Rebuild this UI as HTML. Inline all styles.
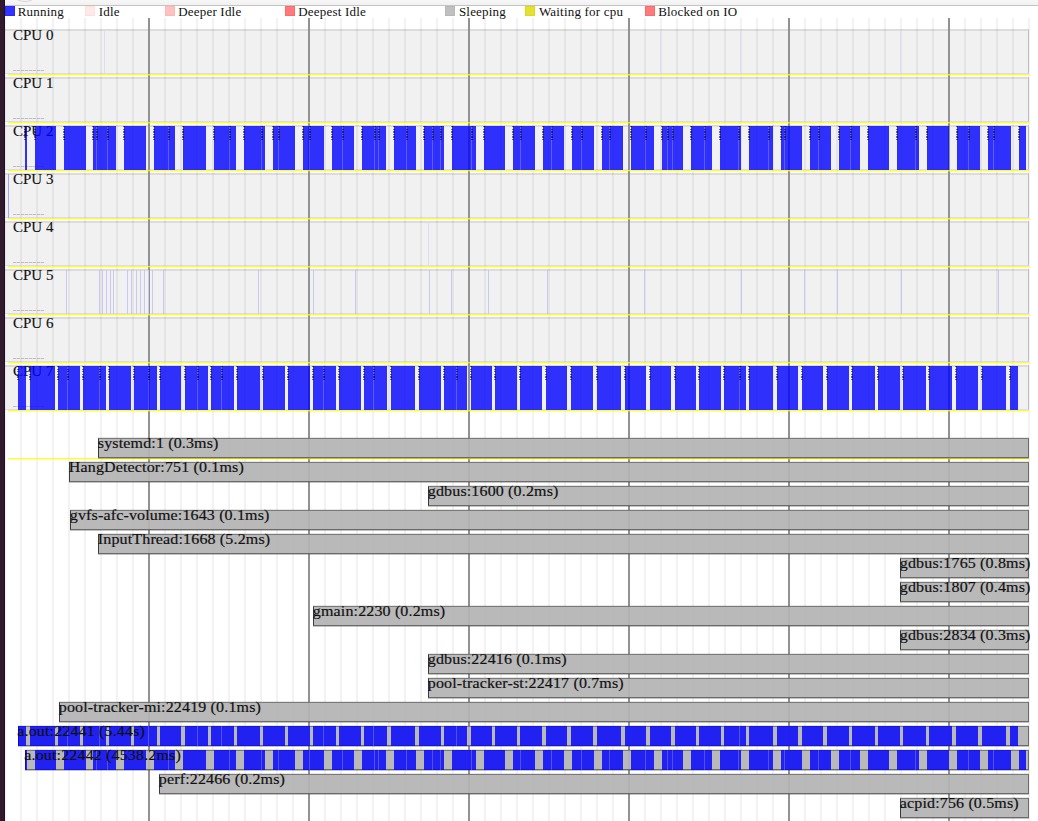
<!DOCTYPE html><html><head><meta charset="utf-8"><style>
html,body{margin:0;padding:0;}
body{width:1038px;height:821px;overflow:hidden;background:#fff;position:relative;font-family:"Liberation Serif",serif;color:#000;}
div{position:absolute;box-sizing:border-box;}
.t{white-space:pre;line-height:20px;}
.lg{font-size:13px;line-height:14px;top:5px;letter-spacing:0.2px;white-space:pre;color:#111;}
.sq{top:6px;width:10px;height:10px;}
.mn{width:2px;background:rgba(0,0,0,0.05);}
.mj{width:2px;background:#929292;}
.rowbg{left:5px;width:1024px;background:#f1f1f1;border-top:2px solid #dcdcdc;border-right:1px solid #c8c8c8;}
.yl{left:8px;width:1021px;height:2px;background:linear-gradient(rgba(255,255,0,.85) 50%,rgba(255,255,0,.3) 50%);}
.cl{font-size:15px;line-height:18px;left:13px;white-space:pre;color:#111;-webkit-text-stroke:0.15px #111;}
.dash{left:13px;width:31px;height:1px;background:repeating-linear-gradient(90deg,#c4bcc4 0 3px,#dcd8dc 3px 4px);}
.b{background:rgba(0,0,255,0.8);}
.sp{width:1px;background:rgba(255,255,255,0.22);}
.b2{background:rgba(0,0,255,0.82);}
.tx{width:2px;height:14px;background:repeating-linear-gradient(180deg,rgba(0,0,30,.55) 0 1.3px,rgba(0,0,0,0) 1.3px 2.6px);}
.th{width:1px;background:#c4c4f4;}
.bar{box-shadow:0 1px 0 rgba(60,60,50,0.3),0 -1px 0 rgba(60,60,60,0.12);background:rgba(180,180,180,0.93);border:1px solid #6a6a6a;border-top-color:#7a7a7a;border-left-color:#3a3a3a;}
.pl{font-size:16px;line-height:20px;letter-spacing:0.15px;-webkit-text-stroke:0.2px #111;transform:scaleY(0.9);transform-origin:0 15.4px;white-space:pre;color:#111;}

</style></head><body>
<div style="left:5px;top:0;width:1033px;height:5px;background:linear-gradient(#f7f7f7,#f1f1f1);"></div>
<div style="left:8px;top:-32px;width:34px;height:34px;border-radius:50%;border:1px solid #d4d4d4;"></div>
<div style="left:5px;top:5px;width:1033px;height:1px;background:#c4c4c4;"></div>
<div class="sq" style="left:5px;background:#3333ff;border:1px solid #2a2aff;"></div>
<div class="lg" style="left:17.7px;">Running</div>
<div class="sq" style="left:85px;background:#ffe8e8;border:1px solid #ffe0e0;"></div>
<div class="lg" style="left:98.7px;">Idle</div>
<div class="sq" style="left:165px;background:#ffc0c0;border:1px solid #ffb8b8;"></div>
<div class="lg" style="left:178.2px;">Deeper Idle</div>
<div class="sq" style="left:285px;background:#ff7a7a;border:1px solid #ff6a6a;"></div>
<div class="lg" style="left:298.2px;">Deepest Idle</div>
<div class="sq" style="left:445px;background:#c0c0c0;border:1px solid #b8b8b8;"></div>
<div class="lg" style="left:458.9px;">Sleeping</div>
<div class="sq" style="left:525px;background:#e4e034;border:1px solid #e0da10;"></div>
<div class="lg" style="left:538.9px;">Waiting for cpu</div>
<div class="sq" style="left:645px;background:#ff7a7a;border:1px solid #ff6a6a;"></div>
<div class="lg" style="left:658.2px;">Blocked on IO</div>
<div class="rowbg" style="top:29px;height:44px;"></div>
<div style="left:5px;top:73px;width:1024px;height:1px;background:#dcdcf0;"></div>
<div class="rowbg" style="top:77px;height:44px;"></div>
<div style="left:5px;top:121px;width:1024px;height:1px;background:#dcdcf0;"></div>
<div class="rowbg" style="top:125px;height:44px;"></div>
<div style="left:5px;top:169px;width:1024px;height:1px;background:#dcdcf0;"></div>
<div class="rowbg" style="top:173px;height:44px;"></div>
<div style="left:5px;top:217px;width:1024px;height:1px;background:#dcdcf0;"></div>
<div class="rowbg" style="top:221px;height:44px;"></div>
<div style="left:5px;top:265px;width:1024px;height:1px;background:#dcdcf0;"></div>
<div class="rowbg" style="top:269px;height:44px;"></div>
<div style="left:5px;top:313px;width:1024px;height:1px;background:#dcdcf0;"></div>
<div class="rowbg" style="top:317px;height:44px;"></div>
<div style="left:5px;top:361px;width:1024px;height:1px;background:#dcdcf0;"></div>
<div class="rowbg" style="top:365px;height:44px;"></div>
<div style="left:5px;top:409px;width:1024px;height:1px;background:#dcdcf0;"></div>
<div class="mn" style="left:4px;top:18px;height:803px;"></div>
<div class="mn" style="left:20px;top:18px;height:803px;"></div>
<div class="mn" style="left:36px;top:18px;height:803px;"></div>
<div class="mn" style="left:52px;top:18px;height:803px;"></div>
<div class="mn" style="left:68px;top:18px;height:803px;"></div>
<div class="mn" style="left:84px;top:18px;height:803px;"></div>
<div class="mn" style="left:100px;top:18px;height:803px;"></div>
<div class="mn" style="left:116px;top:18px;height:803px;"></div>
<div class="mn" style="left:132px;top:18px;height:803px;"></div>
<div class="mn" style="left:164px;top:18px;height:803px;"></div>
<div class="mn" style="left:180px;top:18px;height:803px;"></div>
<div class="mn" style="left:196px;top:18px;height:803px;"></div>
<div class="mn" style="left:212px;top:18px;height:803px;"></div>
<div class="mn" style="left:228px;top:18px;height:803px;"></div>
<div class="mn" style="left:244px;top:18px;height:803px;"></div>
<div class="mn" style="left:260px;top:18px;height:803px;"></div>
<div class="mn" style="left:276px;top:18px;height:803px;"></div>
<div class="mn" style="left:292px;top:18px;height:803px;"></div>
<div class="mn" style="left:324px;top:18px;height:803px;"></div>
<div class="mn" style="left:340px;top:18px;height:803px;"></div>
<div class="mn" style="left:356px;top:18px;height:803px;"></div>
<div class="mn" style="left:372px;top:18px;height:803px;"></div>
<div class="mn" style="left:388px;top:18px;height:803px;"></div>
<div class="mn" style="left:404px;top:18px;height:803px;"></div>
<div class="mn" style="left:420px;top:18px;height:803px;"></div>
<div class="mn" style="left:436px;top:18px;height:803px;"></div>
<div class="mn" style="left:452px;top:18px;height:803px;"></div>
<div class="mn" style="left:484px;top:18px;height:803px;"></div>
<div class="mn" style="left:500px;top:18px;height:803px;"></div>
<div class="mn" style="left:516px;top:18px;height:803px;"></div>
<div class="mn" style="left:532px;top:18px;height:803px;"></div>
<div class="mn" style="left:548px;top:18px;height:803px;"></div>
<div class="mn" style="left:564px;top:18px;height:803px;"></div>
<div class="mn" style="left:580px;top:18px;height:803px;"></div>
<div class="mn" style="left:596px;top:18px;height:803px;"></div>
<div class="mn" style="left:612px;top:18px;height:803px;"></div>
<div class="mn" style="left:644px;top:18px;height:803px;"></div>
<div class="mn" style="left:660px;top:18px;height:803px;"></div>
<div class="mn" style="left:676px;top:18px;height:803px;"></div>
<div class="mn" style="left:692px;top:18px;height:803px;"></div>
<div class="mn" style="left:708px;top:18px;height:803px;"></div>
<div class="mn" style="left:724px;top:18px;height:803px;"></div>
<div class="mn" style="left:740px;top:18px;height:803px;"></div>
<div class="mn" style="left:756px;top:18px;height:803px;"></div>
<div class="mn" style="left:772px;top:18px;height:803px;"></div>
<div class="mn" style="left:804px;top:18px;height:803px;"></div>
<div class="mn" style="left:820px;top:18px;height:803px;"></div>
<div class="mn" style="left:836px;top:18px;height:803px;"></div>
<div class="mn" style="left:852px;top:18px;height:803px;"></div>
<div class="mn" style="left:868px;top:18px;height:803px;"></div>
<div class="mn" style="left:884px;top:18px;height:803px;"></div>
<div class="mn" style="left:900px;top:18px;height:803px;"></div>
<div class="mn" style="left:916px;top:18px;height:803px;"></div>
<div class="mn" style="left:932px;top:18px;height:803px;"></div>
<div class="mn" style="left:964px;top:18px;height:803px;"></div>
<div class="mn" style="left:980px;top:18px;height:803px;"></div>
<div class="mn" style="left:996px;top:18px;height:803px;"></div>
<div class="mn" style="left:1012px;top:18px;height:803px;"></div>
<div class="mn" style="left:1028px;top:18px;height:803px;"></div>
<div class="mj" style="left:148px;top:18px;height:803px;"></div>
<div class="mj" style="left:308px;top:18px;height:803px;"></div>
<div class="mj" style="left:468px;top:18px;height:803px;"></div>
<div class="mj" style="left:628px;top:18px;height:803px;"></div>
<div class="mj" style="left:788px;top:18px;height:803px;"></div>
<div class="mj" style="left:948px;top:18px;height:803px;"></div>
<div class="cl" style="top:26px;">CPU 0</div>
<div class="dash" style="top:70px;"></div>
<div class="cl" style="top:74px;">CPU 1</div>
<div class="dash" style="top:118px;"></div>
<div class="cl" style="top:122px;">CPU 2</div>
<div class="dash" style="top:166px;"></div>
<div class="cl" style="top:170px;">CPU 3</div>
<div class="dash" style="top:214px;"></div>
<div class="cl" style="top:218px;">CPU 4</div>
<div class="dash" style="top:262px;"></div>
<div class="cl" style="top:266px;">CPU 5</div>
<div class="dash" style="top:310px;"></div>
<div class="cl" style="top:314px;">CPU 6</div>
<div class="dash" style="top:358px;"></div>
<div class="cl" style="top:362px;">CPU 7</div>
<div class="dash" style="top:406px;"></div>
<div class="th" style="left:104px;top:30px;height:44px;background:#dcdcf4;"></div>
<div class="th" style="left:660.4px;top:30px;height:44px;background:#dcdcf4;"></div>
<div class="th" style="left:740px;top:30px;height:44px;background:#dcdcf4;"></div>
<div class="th" style="left:900px;top:30px;height:44px;background:#dcdcf4;"></div>
<div class="th" style="left:8px;top:174px;height:44px;background:#a4a4ff;"></div>
<div class="th" style="left:428px;top:222px;height:44px;background:#dcdcf4;"></div>
<div class="th" style="left:66.4px;top:270px;height:44px;background:#c8c8f2;"></div>
<div class="th" style="left:99px;top:270px;height:44px;background:#c8c8f2;"></div>
<div class="th" style="left:102px;top:270px;height:44px;background:#c8c8f2;"></div>
<div class="th" style="left:106px;top:270px;height:44px;background:#c8c8f2;"></div>
<div class="th" style="left:110px;top:270px;height:44px;background:#c8c8f2;"></div>
<div class="th" style="left:113px;top:270px;height:44px;background:#c8c8f2;"></div>
<div class="th" style="left:127px;top:270px;height:44px;background:#c8c8f2;"></div>
<div class="th" style="left:131px;top:270px;height:44px;background:#c8c8f2;"></div>
<div class="th" style="left:136px;top:270px;height:44px;background:#c8c8f2;"></div>
<div class="th" style="left:140px;top:270px;height:44px;background:#c8c8f2;"></div>
<div class="th" style="left:144px;top:270px;height:44px;background:#c8c8f2;"></div>
<div class="th" style="left:148px;top:270px;height:44px;background:#c8c8f2;"></div>
<div class="th" style="left:151.6px;top:270px;height:44px;background:#c8c8f2;"></div>
<div class="th" style="left:163px;top:270px;height:44px;background:#c8c8f2;"></div>
<div class="th" style="left:258px;top:270px;height:44px;background:#c8c8f2;"></div>
<div class="th" style="left:313px;top:270px;height:44px;background:#c8c8f2;"></div>
<div class="th" style="left:354.7px;top:270px;height:44px;background:#c8c8f2;"></div>
<div class="th" style="left:429px;top:270px;height:44px;background:#c8c8f2;"></div>
<div class="th" style="left:451px;top:270px;height:44px;background:#c8c8f2;"></div>
<div class="th" style="left:488px;top:270px;height:44px;background:#c8c8f2;"></div>
<div class="th" style="left:547px;top:270px;height:44px;background:#c8c8f2;"></div>
<div class="th" style="left:644px;top:270px;height:44px;background:#c8c8f2;"></div>
<div class="th" style="left:740.5px;top:270px;height:44px;background:#c8c8f2;"></div>
<div class="th" style="left:804.4px;top:270px;height:44px;background:#c8c8f2;"></div>
<div class="th" style="left:836.7px;top:270px;height:44px;background:#c8c8f2;"></div>
<div class="th" style="left:901px;top:270px;height:44px;background:#c8c8f2;"></div>
<div class="th" style="left:997.7px;top:270px;height:44px;background:#c8c8f2;"></div>
<div class="b" style="left:25px;top:126px;width:1.5px;height:44px;"></div>
<div class="tx" style="left:24px;top:126px;"></div>
<div class="b" style="left:35px;top:126px;width:21px;height:44px;"></div>
<div class="tx" style="left:34px;top:126px;"></div>
<div class="b" style="left:64px;top:126px;width:21.5px;height:44px;"></div>
<div class="tx" style="left:63px;top:126px;"></div>
<div class="b" style="left:93.4px;top:126px;width:22.4px;height:44px;"></div>
<div class="tx" style="left:92.4px;top:126px;"></div>
<div class="b" style="left:123.7px;top:126px;width:22.2px;height:44px;"></div>
<div class="tx" style="left:122.7px;top:126px;"></div>
<div class="b" style="left:153.8px;top:126px;width:21.5px;height:44px;"></div>
<div class="tx" style="left:152.8px;top:126px;"></div>
<div class="b" style="left:183px;top:126px;width:23px;height:44px;"></div>
<div class="tx" style="left:182px;top:126px;"></div>
<div class="b" style="left:214px;top:126px;width:22px;height:44px;"></div>
<div class="tx" style="left:213px;top:126px;"></div>
<div class="b" style="left:244px;top:126px;width:21.3px;height:44px;"></div>
<div class="tx" style="left:243px;top:126px;"></div>
<div class="b" style="left:273.4px;top:126px;width:21.6px;height:44px;"></div>
<div class="tx" style="left:272.4px;top:126px;"></div>
<div class="b" style="left:303px;top:126px;width:21.4px;height:44px;"></div>
<div class="tx" style="left:302px;top:126px;"></div>
<div class="b" style="left:332.4px;top:126px;width:21.2px;height:44px;"></div>
<div class="tx" style="left:331.4px;top:126px;"></div>
<div class="b" style="left:362px;top:126px;width:23.8px;height:44px;"></div>
<div class="tx" style="left:361px;top:126px;"></div>
<div class="b" style="left:394px;top:126px;width:21.7px;height:44px;"></div>
<div class="tx" style="left:393px;top:126px;"></div>
<div class="b" style="left:423.6px;top:126px;width:20.7px;height:44px;"></div>
<div class="tx" style="left:422.6px;top:126px;"></div>
<div class="b" style="left:452.3px;top:126px;width:23.5px;height:44px;"></div>
<div class="tx" style="left:451.3px;top:126px;"></div>
<div class="b" style="left:484px;top:126px;width:20.7px;height:44px;"></div>
<div class="tx" style="left:483px;top:126px;"></div>
<div class="b" style="left:513px;top:126px;width:21.8px;height:44px;"></div>
<div class="tx" style="left:512px;top:126px;"></div>
<div class="b" style="left:543px;top:126px;width:21px;height:44px;"></div>
<div class="tx" style="left:542px;top:126px;"></div>
<div class="b" style="left:572.3px;top:126px;width:21.7px;height:44px;"></div>
<div class="tx" style="left:571.3px;top:126px;"></div>
<div class="b" style="left:602px;top:126px;width:21px;height:44px;"></div>
<div class="tx" style="left:601px;top:126px;"></div>
<div class="b" style="left:631.2px;top:126px;width:22.8px;height:44px;"></div>
<div class="tx" style="left:630.2px;top:126px;"></div>
<div class="b" style="left:662px;top:126px;width:21px;height:44px;"></div>
<div class="tx" style="left:661px;top:126px;"></div>
<div class="b" style="left:691px;top:126px;width:21px;height:44px;"></div>
<div class="tx" style="left:690px;top:126px;"></div>
<div class="b" style="left:720px;top:126px;width:21px;height:44px;"></div>
<div class="tx" style="left:719px;top:126px;"></div>
<div class="b" style="left:749px;top:126px;width:23.8px;height:44px;"></div>
<div class="tx" style="left:748px;top:126px;"></div>
<div class="b" style="left:781px;top:126px;width:21px;height:44px;"></div>
<div class="tx" style="left:780px;top:126px;"></div>
<div class="b" style="left:810px;top:126px;width:21px;height:44px;"></div>
<div class="tx" style="left:809px;top:126px;"></div>
<div class="b" style="left:839px;top:126px;width:21px;height:44px;"></div>
<div class="tx" style="left:838px;top:126px;"></div>
<div class="b" style="left:868px;top:126px;width:21px;height:44px;"></div>
<div class="tx" style="left:867px;top:126px;"></div>
<div class="b" style="left:897.3px;top:126px;width:21.7px;height:44px;"></div>
<div class="tx" style="left:896.3px;top:126px;"></div>
<div class="b" style="left:927px;top:126px;width:22px;height:44px;"></div>
<div class="tx" style="left:926px;top:126px;"></div>
<div class="b" style="left:957px;top:126px;width:23px;height:44px;"></div>
<div class="tx" style="left:956px;top:126px;"></div>
<div class="b" style="left:988px;top:126px;width:22.7px;height:44px;"></div>
<div class="tx" style="left:987px;top:126px;"></div>
<div class="b" style="left:1019px;top:126px;width:7.2px;height:44px;"></div>
<div class="tx" style="left:1018px;top:126px;"></div>
<div class="b" style="left:17.8px;top:366px;width:8.2px;height:44px;"></div>
<div class="tx" style="left:16.8px;top:366px;"></div>
<div class="b" style="left:30px;top:366px;width:25px;height:44px;"></div>
<div class="tx" style="left:29px;top:366px;"></div>
<div class="b" style="left:58px;top:366px;width:22px;height:44px;"></div>
<div class="tx" style="left:57px;top:366px;"></div>
<div class="b" style="left:83.3px;top:366px;width:22.6px;height:44px;"></div>
<div class="tx" style="left:82.3px;top:366px;"></div>
<div class="b" style="left:109.3px;top:366px;width:21.7px;height:44px;"></div>
<div class="tx" style="left:108.3px;top:366px;"></div>
<div class="b" style="left:134.3px;top:366px;width:22.7px;height:44px;"></div>
<div class="tx" style="left:133.3px;top:366px;"></div>
<div class="b" style="left:160.1px;top:366px;width:21.4px;height:44px;"></div>
<div class="tx" style="left:159.1px;top:366px;"></div>
<div class="b" style="left:185.3px;top:366px;width:22.7px;height:44px;"></div>
<div class="tx" style="left:184.3px;top:366px;"></div>
<div class="b" style="left:211.3px;top:366px;width:22.7px;height:44px;"></div>
<div class="tx" style="left:210.3px;top:366px;"></div>
<div class="b" style="left:237.3px;top:366px;width:22.7px;height:44px;"></div>
<div class="tx" style="left:236.3px;top:366px;"></div>
<div class="b" style="left:263.3px;top:366px;width:21.7px;height:44px;"></div>
<div class="tx" style="left:262.3px;top:366px;"></div>
<div class="b" style="left:288.3px;top:366px;width:22px;height:44px;"></div>
<div class="tx" style="left:287.3px;top:366px;"></div>
<div class="b" style="left:313.4px;top:366px;width:22.3px;height:44px;"></div>
<div class="tx" style="left:312.4px;top:366px;"></div>
<div class="b" style="left:339px;top:366px;width:22px;height:44px;"></div>
<div class="tx" style="left:338px;top:366px;"></div>
<div class="b" style="left:364.3px;top:366px;width:23.2px;height:44px;"></div>
<div class="tx" style="left:363.3px;top:366px;"></div>
<div class="b" style="left:391px;top:366px;width:24px;height:44px;"></div>
<div class="tx" style="left:390px;top:366px;"></div>
<div class="b" style="left:418.6px;top:366px;width:22.1px;height:44px;"></div>
<div class="tx" style="left:417.6px;top:366px;"></div>
<div class="b" style="left:444px;top:366px;width:23px;height:44px;"></div>
<div class="tx" style="left:443px;top:366px;"></div>
<div class="b" style="left:471px;top:366px;width:20.6px;height:44px;"></div>
<div class="tx" style="left:470px;top:366px;"></div>
<div class="b" style="left:495px;top:366px;width:22.2px;height:44px;"></div>
<div class="tx" style="left:494px;top:366px;"></div>
<div class="b" style="left:520.3px;top:366px;width:22px;height:44px;"></div>
<div class="tx" style="left:519.3px;top:366px;"></div>
<div class="b" style="left:546px;top:366px;width:21.2px;height:44px;"></div>
<div class="tx" style="left:545px;top:366px;"></div>
<div class="b" style="left:571px;top:366px;width:22px;height:44px;"></div>
<div class="tx" style="left:570px;top:366px;"></div>
<div class="b" style="left:596.6px;top:366px;width:24.4px;height:44px;"></div>
<div class="tx" style="left:595.6px;top:366px;"></div>
<div class="b" style="left:624.6px;top:366px;width:21.4px;height:44px;"></div>
<div class="tx" style="left:623.6px;top:366px;"></div>
<div class="b" style="left:649.7px;top:366px;width:21.3px;height:44px;"></div>
<div class="tx" style="left:648.7px;top:366px;"></div>
<div class="b" style="left:674.5px;top:366px;width:21.5px;height:44px;"></div>
<div class="tx" style="left:673.5px;top:366px;"></div>
<div class="b" style="left:699.2px;top:366px;width:21.6px;height:44px;"></div>
<div class="tx" style="left:698.2px;top:366px;"></div>
<div class="b" style="left:724.3px;top:366px;width:21.7px;height:44px;"></div>
<div class="tx" style="left:723.3px;top:366px;"></div>
<div class="b" style="left:749.4px;top:366px;width:23.8px;height:44px;"></div>
<div class="tx" style="left:748.4px;top:366px;"></div>
<div class="b" style="left:777px;top:366px;width:21.2px;height:44px;"></div>
<div class="tx" style="left:776px;top:366px;"></div>
<div class="b" style="left:802px;top:366px;width:21.3px;height:44px;"></div>
<div class="tx" style="left:801px;top:366px;"></div>
<div class="b" style="left:827px;top:366px;width:22px;height:44px;"></div>
<div class="tx" style="left:826px;top:366px;"></div>
<div class="b" style="left:852.3px;top:366px;width:22.4px;height:44px;"></div>
<div class="tx" style="left:851.3px;top:366px;"></div>
<div class="b" style="left:878px;top:366px;width:22px;height:44px;"></div>
<div class="tx" style="left:877px;top:366px;"></div>
<div class="b" style="left:903.2px;top:366px;width:22.8px;height:44px;"></div>
<div class="tx" style="left:902.2px;top:366px;"></div>
<div class="b" style="left:929.2px;top:366px;width:22.8px;height:44px;"></div>
<div class="tx" style="left:928.2px;top:366px;"></div>
<div class="b" style="left:955.7px;top:366px;width:22.6px;height:44px;"></div>
<div class="tx" style="left:954.7px;top:366px;"></div>
<div class="b" style="left:981.8px;top:366px;width:24.6px;height:44px;"></div>
<div class="tx" style="left:980.8px;top:366px;"></div>
<div class="b" style="left:1010px;top:366px;width:8px;height:44px;"></div>
<div class="tx" style="left:1009px;top:366px;"></div>
<div class="sp" style="left:96.4px;top:126px;height:44px;"></div>
<div class="tx" style="left:96.4px;top:126px;"></div>
<div class="sp" style="left:106.8px;top:126px;height:44px;"></div>
<div class="tx" style="left:106.8px;top:126px;"></div>
<div class="sp" style="left:168.4px;top:126px;height:44px;"></div>
<div class="tx" style="left:168.4px;top:126px;"></div>
<div class="sp" style="left:228.6px;top:126px;height:44px;"></div>
<div class="tx" style="left:228.6px;top:126px;"></div>
<div class="sp" style="left:261.3px;top:126px;height:44px;"></div>
<div class="tx" style="left:261.3px;top:126px;"></div>
<div class="sp" style="left:277.6px;top:126px;height:44px;"></div>
<div class="tx" style="left:277.6px;top:126px;"></div>
<div class="sp" style="left:308.9px;top:126px;height:44px;"></div>
<div class="tx" style="left:308.9px;top:126px;"></div>
<div class="sp" style="left:341.5px;top:126px;height:44px;"></div>
<div class="tx" style="left:341.5px;top:126px;"></div>
<div class="sp" style="left:374px;top:126px;height:44px;"></div>
<div class="tx" style="left:374px;top:126px;"></div>
<div class="sp" style="left:378.3px;top:126px;height:44px;"></div>
<div class="tx" style="left:378.3px;top:126px;"></div>
<div class="sp" style="left:405.9px;top:126px;height:44px;"></div>
<div class="tx" style="left:405.9px;top:126px;"></div>
<div class="sp" style="left:432.4px;top:126px;height:44px;"></div>
<div class="tx" style="left:432.4px;top:126px;"></div>
<div class="sp" style="left:440px;top:126px;height:44px;"></div>
<div class="tx" style="left:440px;top:126px;"></div>
<div class="sp" style="left:471px;top:126px;height:44px;"></div>
<div class="tx" style="left:471px;top:126px;"></div>
<div class="sp" style="left:519.5px;top:126px;height:44px;"></div>
<div class="tx" style="left:519.5px;top:126px;"></div>
<div class="sp" style="left:551.4px;top:126px;height:44px;"></div>
<div class="tx" style="left:551.4px;top:126px;"></div>
<div class="sp" style="left:581.4px;top:126px;height:44px;"></div>
<div class="tx" style="left:581.4px;top:126px;"></div>
<div class="sp" style="left:609px;top:126px;height:44px;"></div>
<div class="tx" style="left:609px;top:126px;"></div>
<div class="sp" style="left:645.3px;top:126px;height:44px;"></div>
<div class="tx" style="left:645.3px;top:126px;"></div>
<div class="sp" style="left:666.6px;top:126px;height:44px;"></div>
<div class="tx" style="left:666.6px;top:126px;"></div>
<div class="sp" style="left:672.4px;top:126px;height:44px;"></div>
<div class="tx" style="left:672.4px;top:126px;"></div>
<div class="sp" style="left:703.5px;top:126px;height:44px;"></div>
<div class="tx" style="left:703.5px;top:126px;"></div>
<div class="sp" style="left:738px;top:126px;height:44px;"></div>
<div class="tx" style="left:738px;top:126px;"></div>
<div class="sp" style="left:768.2px;top:126px;height:44px;"></div>
<div class="tx" style="left:768.2px;top:126px;"></div>
<div class="sp" style="left:784px;top:126px;height:44px;"></div>
<div class="tx" style="left:784px;top:126px;"></div>
<div class="sp" style="left:817.6px;top:126px;height:44px;"></div>
<div class="tx" style="left:817.6px;top:126px;"></div>
<div class="sp" style="left:849.7px;top:126px;height:44px;"></div>
<div class="tx" style="left:849.7px;top:126px;"></div>
<div class="sp" style="left:915px;top:126px;height:44px;"></div>
<div class="tx" style="left:915px;top:126px;"></div>
<div class="sp" style="left:967.6px;top:126px;height:44px;"></div>
<div class="tx" style="left:967.6px;top:126px;"></div>
<div class="sp" style="left:993.4px;top:126px;height:44px;"></div>
<div class="tx" style="left:993.4px;top:126px;"></div>
<div class="sp" style="left:67.2px;top:366px;height:44px;"></div>
<div class="tx" style="left:67.2px;top:366px;"></div>
<div class="sp" style="left:99px;top:366px;height:44px;"></div>
<div class="tx" style="left:99px;top:366px;"></div>
<div class="sp" style="left:148px;top:366px;height:44px;"></div>
<div class="tx" style="left:148px;top:366px;"></div>
<div class="sp" style="left:196.7px;top:366px;height:44px;"></div>
<div class="tx" style="left:196.7px;top:366px;"></div>
<div class="sp" style="left:220.6px;top:366px;height:44px;"></div>
<div class="tx" style="left:220.6px;top:366px;"></div>
<div class="sp" style="left:323.2px;top:366px;height:44px;"></div>
<div class="tx" style="left:323.2px;top:366px;"></div>
<div class="sp" style="left:373.3px;top:366px;height:44px;"></div>
<div class="tx" style="left:373.3px;top:366px;"></div>
<div class="sp" style="left:455.5px;top:366px;height:44px;"></div>
<div class="tx" style="left:455.5px;top:366px;"></div>
<div class="sp" style="left:738.6px;top:366px;height:44px;"></div>
<div class="tx" style="left:738.6px;top:366px;"></div>
<div class="yl" style="top:74px;"></div>
<div class="yl" style="top:122px;"></div>
<div class="yl" style="top:170px;"></div>
<div class="yl" style="top:218px;"></div>
<div class="yl" style="top:266px;"></div>
<div class="yl" style="top:314px;"></div>
<div class="yl" style="top:362px;"></div>
<div class="yl" style="top:410px;"></div>
<div class="yl" style="top:458px;"></div>
<div class="bar" style="left:98px;top:438px;width:931px;height:20px;"></div>
<div class="pl" style="left:97.8px;top:433px;">systemd:1 (0.3ms)</div>
<div class="bar" style="left:69px;top:462px;width:960px;height:20px;"></div>
<div class="pl" style="left:68.8px;top:457px;">HangDetector:751 (0.1ms)</div>
<div class="bar" style="left:428px;top:486px;width:601px;height:20px;"></div>
<div class="pl" style="left:427.8px;top:481px;">gdbus:1600 (0.2ms)</div>
<div class="bar" style="left:70px;top:510px;width:959px;height:20px;"></div>
<div class="pl" style="left:69.8px;top:505px;">gvfs-afc-volume:1643 (0.1ms)</div>
<div class="bar" style="left:98px;top:534px;width:931px;height:20px;"></div>
<div class="pl" style="left:97.8px;top:529px;">InputThread:1668 (5.2ms)</div>
<div class="bar" style="left:900px;top:558px;width:129px;height:20px;"></div>
<div class="pl" style="left:899.8px;top:553px;">gdbus:1765 (0.8ms)</div>
<div class="bar" style="left:900px;top:582px;width:129px;height:20px;"></div>
<div class="pl" style="left:899.8px;top:577px;">gdbus:1807 (0.4ms)</div>
<div class="bar" style="left:313px;top:606px;width:716px;height:20px;"></div>
<div class="pl" style="left:312.8px;top:601px;">gmain:2230 (0.2ms)</div>
<div class="bar" style="left:900px;top:630px;width:129px;height:20px;"></div>
<div class="pl" style="left:899.8px;top:625px;">gdbus:2834 (0.3ms)</div>
<div class="bar" style="left:428px;top:654px;width:601px;height:20px;"></div>
<div class="pl" style="left:427.8px;top:649px;">gdbus:22416 (0.1ms)</div>
<div class="bar" style="left:428px;top:678px;width:601px;height:20px;"></div>
<div class="pl" style="left:427.8px;top:673px;">pool-tracker-st:22417 (0.7ms)</div>
<div class="bar" style="left:59px;top:702px;width:970px;height:20px;"></div>
<div class="pl" style="left:58.8px;top:697px;">pool-tracker-mi:22419 (0.1ms)</div>
<div class="bar" style="left:17.5px;top:726px;width:1011.5px;height:20px;"></div>
<div class="b2" style="left:17.8px;top:726px;width:8.2px;height:20px;"></div>
<div class="b2" style="left:30px;top:726px;width:25px;height:20px;"></div>
<div class="b2" style="left:58px;top:726px;width:22px;height:20px;"></div>
<div class="b2" style="left:83.3px;top:726px;width:22.6px;height:20px;"></div>
<div class="b2" style="left:109.3px;top:726px;width:21.7px;height:20px;"></div>
<div class="b2" style="left:134.3px;top:726px;width:22.7px;height:20px;"></div>
<div class="b2" style="left:160.1px;top:726px;width:21.4px;height:20px;"></div>
<div class="b2" style="left:185.3px;top:726px;width:22.7px;height:20px;"></div>
<div class="b2" style="left:211.3px;top:726px;width:22.7px;height:20px;"></div>
<div class="b2" style="left:237.3px;top:726px;width:22.7px;height:20px;"></div>
<div class="b2" style="left:263.3px;top:726px;width:21.7px;height:20px;"></div>
<div class="b2" style="left:288.3px;top:726px;width:22px;height:20px;"></div>
<div class="b2" style="left:313.4px;top:726px;width:22.3px;height:20px;"></div>
<div class="b2" style="left:339px;top:726px;width:22px;height:20px;"></div>
<div class="b2" style="left:364.3px;top:726px;width:23.2px;height:20px;"></div>
<div class="b2" style="left:391px;top:726px;width:24px;height:20px;"></div>
<div class="b2" style="left:418.6px;top:726px;width:22.1px;height:20px;"></div>
<div class="b2" style="left:444px;top:726px;width:23px;height:20px;"></div>
<div class="b2" style="left:471px;top:726px;width:20.6px;height:20px;"></div>
<div class="b2" style="left:495px;top:726px;width:22.2px;height:20px;"></div>
<div class="b2" style="left:520.3px;top:726px;width:22px;height:20px;"></div>
<div class="b2" style="left:546px;top:726px;width:21.2px;height:20px;"></div>
<div class="b2" style="left:571px;top:726px;width:22px;height:20px;"></div>
<div class="b2" style="left:596.6px;top:726px;width:24.4px;height:20px;"></div>
<div class="b2" style="left:624.6px;top:726px;width:21.4px;height:20px;"></div>
<div class="b2" style="left:649.7px;top:726px;width:21.3px;height:20px;"></div>
<div class="b2" style="left:674.5px;top:726px;width:21.5px;height:20px;"></div>
<div class="b2" style="left:699.2px;top:726px;width:21.6px;height:20px;"></div>
<div class="b2" style="left:724.3px;top:726px;width:21.7px;height:20px;"></div>
<div class="b2" style="left:749.4px;top:726px;width:23.8px;height:20px;"></div>
<div class="b2" style="left:777px;top:726px;width:21.2px;height:20px;"></div>
<div class="b2" style="left:802px;top:726px;width:21.3px;height:20px;"></div>
<div class="b2" style="left:827px;top:726px;width:22px;height:20px;"></div>
<div class="b2" style="left:852.3px;top:726px;width:22.4px;height:20px;"></div>
<div class="b2" style="left:878px;top:726px;width:22px;height:20px;"></div>
<div class="b2" style="left:903.2px;top:726px;width:22.8px;height:20px;"></div>
<div class="b2" style="left:929.2px;top:726px;width:22.8px;height:20px;"></div>
<div class="b2" style="left:955.7px;top:726px;width:22.6px;height:20px;"></div>
<div class="b2" style="left:981.8px;top:726px;width:24.6px;height:20px;"></div>
<div class="b2" style="left:1010px;top:726px;width:8px;height:20px;"></div>
<div class="sp" style="left:67.2px;top:726px;height:20px;"></div>
<div class="sp" style="left:99px;top:726px;height:20px;"></div>
<div class="sp" style="left:148px;top:726px;height:20px;"></div>
<div class="sp" style="left:196.7px;top:726px;height:20px;"></div>
<div class="sp" style="left:220.6px;top:726px;height:20px;"></div>
<div class="sp" style="left:323.2px;top:726px;height:20px;"></div>
<div class="sp" style="left:373.3px;top:726px;height:20px;"></div>
<div class="sp" style="left:455.5px;top:726px;height:20px;"></div>
<div class="sp" style="left:738.6px;top:726px;height:20px;"></div>
<div class="pl" style="left:17.3px;top:721px;">a.out:22441 (5.44s)</div>
<div class="bar" style="left:24.5px;top:750px;width:1004.5px;height:20px;"></div>
<div class="b2" style="left:25px;top:750px;width:1.5px;height:20px;"></div>
<div class="b2" style="left:35px;top:750px;width:21px;height:20px;"></div>
<div class="b2" style="left:64px;top:750px;width:21.5px;height:20px;"></div>
<div class="b2" style="left:93.4px;top:750px;width:22.4px;height:20px;"></div>
<div class="b2" style="left:123.7px;top:750px;width:22.2px;height:20px;"></div>
<div class="b2" style="left:153.8px;top:750px;width:21.5px;height:20px;"></div>
<div class="b2" style="left:183px;top:750px;width:23px;height:20px;"></div>
<div class="b2" style="left:214px;top:750px;width:22px;height:20px;"></div>
<div class="b2" style="left:244px;top:750px;width:21.3px;height:20px;"></div>
<div class="b2" style="left:273.4px;top:750px;width:21.6px;height:20px;"></div>
<div class="b2" style="left:303px;top:750px;width:21.4px;height:20px;"></div>
<div class="b2" style="left:332.4px;top:750px;width:21.2px;height:20px;"></div>
<div class="b2" style="left:362px;top:750px;width:23.8px;height:20px;"></div>
<div class="b2" style="left:394px;top:750px;width:21.7px;height:20px;"></div>
<div class="b2" style="left:423.6px;top:750px;width:20.7px;height:20px;"></div>
<div class="b2" style="left:452.3px;top:750px;width:23.5px;height:20px;"></div>
<div class="b2" style="left:484px;top:750px;width:20.7px;height:20px;"></div>
<div class="b2" style="left:513px;top:750px;width:21.8px;height:20px;"></div>
<div class="b2" style="left:543px;top:750px;width:21px;height:20px;"></div>
<div class="b2" style="left:572.3px;top:750px;width:21.7px;height:20px;"></div>
<div class="b2" style="left:602px;top:750px;width:21px;height:20px;"></div>
<div class="b2" style="left:631.2px;top:750px;width:22.8px;height:20px;"></div>
<div class="b2" style="left:662px;top:750px;width:21px;height:20px;"></div>
<div class="b2" style="left:691px;top:750px;width:21px;height:20px;"></div>
<div class="b2" style="left:720px;top:750px;width:21px;height:20px;"></div>
<div class="b2" style="left:749px;top:750px;width:23.8px;height:20px;"></div>
<div class="b2" style="left:781px;top:750px;width:21px;height:20px;"></div>
<div class="b2" style="left:810px;top:750px;width:21px;height:20px;"></div>
<div class="b2" style="left:839px;top:750px;width:21px;height:20px;"></div>
<div class="b2" style="left:868px;top:750px;width:21px;height:20px;"></div>
<div class="b2" style="left:897.3px;top:750px;width:21.7px;height:20px;"></div>
<div class="b2" style="left:927px;top:750px;width:22px;height:20px;"></div>
<div class="b2" style="left:957px;top:750px;width:23px;height:20px;"></div>
<div class="b2" style="left:988px;top:750px;width:22.7px;height:20px;"></div>
<div class="b2" style="left:1019px;top:750px;width:7.2px;height:20px;"></div>
<div class="sp" style="left:96.4px;top:750px;height:20px;"></div>
<div class="sp" style="left:106.8px;top:750px;height:20px;"></div>
<div class="sp" style="left:168.4px;top:750px;height:20px;"></div>
<div class="sp" style="left:228.6px;top:750px;height:20px;"></div>
<div class="sp" style="left:261.3px;top:750px;height:20px;"></div>
<div class="sp" style="left:277.6px;top:750px;height:20px;"></div>
<div class="sp" style="left:308.9px;top:750px;height:20px;"></div>
<div class="sp" style="left:341.5px;top:750px;height:20px;"></div>
<div class="sp" style="left:374px;top:750px;height:20px;"></div>
<div class="sp" style="left:378.3px;top:750px;height:20px;"></div>
<div class="sp" style="left:405.9px;top:750px;height:20px;"></div>
<div class="sp" style="left:432.4px;top:750px;height:20px;"></div>
<div class="sp" style="left:440px;top:750px;height:20px;"></div>
<div class="sp" style="left:471px;top:750px;height:20px;"></div>
<div class="sp" style="left:519.5px;top:750px;height:20px;"></div>
<div class="sp" style="left:551.4px;top:750px;height:20px;"></div>
<div class="sp" style="left:581.4px;top:750px;height:20px;"></div>
<div class="sp" style="left:609px;top:750px;height:20px;"></div>
<div class="sp" style="left:645.3px;top:750px;height:20px;"></div>
<div class="sp" style="left:666.6px;top:750px;height:20px;"></div>
<div class="sp" style="left:672.4px;top:750px;height:20px;"></div>
<div class="sp" style="left:703.5px;top:750px;height:20px;"></div>
<div class="sp" style="left:738px;top:750px;height:20px;"></div>
<div class="sp" style="left:768.2px;top:750px;height:20px;"></div>
<div class="sp" style="left:784px;top:750px;height:20px;"></div>
<div class="sp" style="left:817.6px;top:750px;height:20px;"></div>
<div class="sp" style="left:849.7px;top:750px;height:20px;"></div>
<div class="sp" style="left:915px;top:750px;height:20px;"></div>
<div class="sp" style="left:967.6px;top:750px;height:20px;"></div>
<div class="sp" style="left:993.4px;top:750px;height:20px;"></div>
<div class="pl" style="left:24.3px;top:745px;">a.out:22442 (4538.2ms)</div>
<div class="bar" style="left:159px;top:774px;width:870px;height:20px;"></div>
<div class="pl" style="left:158.8px;top:769px;">perf:22466 (0.2ms)</div>
<div class="bar" style="left:900px;top:798px;width:129px;height:20px;"></div>
<div class="pl" style="left:899.8px;top:793px;">acpid:756 (0.5ms)</div>
<div style="left:0;top:0;width:5px;height:821px;background:#321a2e;border-right:1px solid #210f21;"></div>
</body></html>
